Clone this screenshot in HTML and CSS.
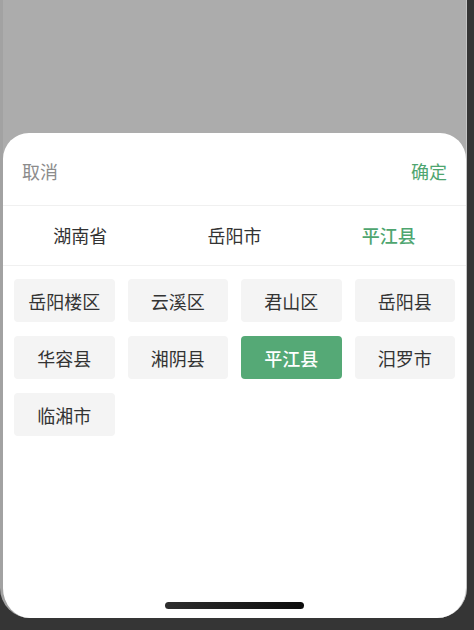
FILE: index.html
```html
<!DOCTYPE html>
<html lang="zh-CN">
<head>
<meta charset="utf-8">
<title>地区选择</title>
<link rel="stylesheet" href="styles.css">
</head>
<body>
<div class="device">
  <div class="screen">
    <div class="overlay"></div>
    <div class="sheet">
      <div class="sheet-header">
        <span class="btn-cancel">取消</span>
        <span class="btn-confirm">确定</span>
      </div>
      <div class="tabs">
        <div class="tab">湖南省</div>
        <div class="tab">岳阳市</div>
        <div class="tab tab-active">平江县</div>
      </div>
      <div class="options">
        <div class="option">岳阳楼区</div>
        <div class="option">云溪区</div>
        <div class="option">君山区</div>
        <div class="option">岳阳县</div>
        <div class="option">华容县</div>
        <div class="option">湘阴县</div>
        <div class="option option-active">平江县</div>
        <div class="option">汨罗市</div>
        <div class="option">临湘市</div>
      </div>
      <div class="spacer"></div>
      <div class="home-indicator"></div>
    </div>
  </div>
</div>
</body>
</html>
```

FILE: styles.css
```css
* { box-sizing: border-box; }
html, body {
  margin: 0;
  padding: 0;
  width: 474px;
  height: 630px;
  overflow: hidden;
  background: #353535;
  font-family: "Noto Sans CJK SC", "Noto Sans", sans-serif;
}
.device {
  width: 474px;
  height: 630px;
  background: #353535;
}
.screen {
  width: 467px;
  height: 618px;
  display: flex;
  flex-direction: column;
  background: #acacac;
  border-left: 3px solid #a2a2a2;
  border-right: 1px solid #c4c4c4;
  border-radius: 0 0 30px 30px;
  overflow: hidden;
}
.overlay {
  height: 133px;
  flex: none;
}
.sheet {
  flex: 1;
  display: flex;
  flex-direction: column;
  background: #ffffff;
  border-radius: 26px 26px 0 0;
}
.sheet-header {
  height: 73px;
  display: flex;
  align-items: center;
  justify-content: space-between;
  padding: 3px 19px 0 19px;
  font-size: 18px;
  border-bottom: 1px solid #f0f0f0;
}
.btn-cancel { color: #8c8c8c; }
.btn-confirm { color: #4ea56f; }
.tabs {
  height: 60px;
  display: grid;
  grid-template-columns: 1fr 1fr 1fr;
  align-items: center;
  border-bottom: 1px solid #f0f0f0;
  font-size: 18px;
  color: #333333;
}
.tab {
  text-align: center;
  padding-bottom: 1px;
}
.tab-active {
  color: #4ea56f;
  font-weight: 500;
}
.options {
  display: grid;
  grid-template-columns: repeat(4, 1fr);
  column-gap: 13px;
  row-gap: 14px;
  padding: 13px 11px 0 11px;
}
.option {
  height: 43px;
  display: flex;
  align-items: center;
  justify-content: center;
  background: #f4f4f4;
  border-radius: 4px;
  font-size: 18px;
  color: #333333;
}
.option-active {
  background: #55a976;
  color: #ffffff;
  font-weight: 500;
}
.spacer { flex: 1; }
.home-indicator {
  align-self: center;
  width: 139px;
  height: 7px;
  border-radius: 4px;
  background: linear-gradient(90deg, #2e2e2e, #0c0c0c);
  margin-bottom: 9px;
}
```
